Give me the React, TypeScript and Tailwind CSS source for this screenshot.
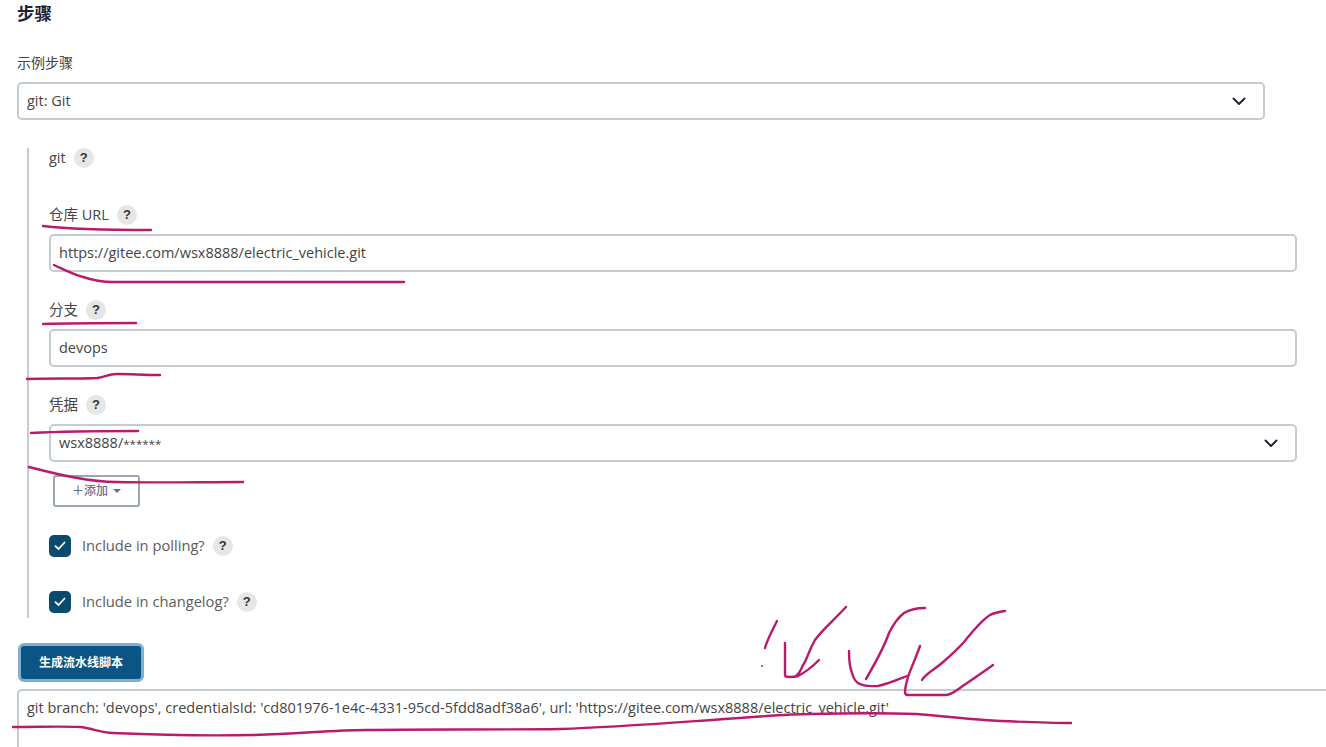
import type { ReactNode } from "react";

const fontStack = "font-['Open_Sans','Noto_Sans_CJK_SC',sans-serif]";

function Help() {
  return (
    <span className="flex h-5 w-5 shrink-0 items-center justify-center rounded-full bg-[#e6e6e6] font-['Liberation_Sans',sans-serif] text-[13px] font-bold text-[#333]">
      ?
    </span>
  );
}

function Label({ text, className }: { text: string; className?: string }) {
  return (
    <div className={`flex h-5 items-center gap-2 text-[14.5px] text-[#444] ${className ?? ""}`}>
      <span>{text}</span>
      <Help />
    </div>
  );
}

function Chevron() {
  return (
    <svg width="14" height="9" viewBox="0 0 14 9" fill="none" className="shrink-0">
      <path d="M1.5 1.5 7 7l5.5-5.5" stroke="#1f2230" strokeWidth="1.9" strokeLinecap="round" strokeLinejoin="round" />
    </svg>
  );
}

function Field({ value, select, className }: { value: ReactNode; select?: boolean; className?: string }) {
  return (
    <div
      className={`flex h-[38px] items-center justify-between rounded-[5px] border-2 border-[#c3ccd1] bg-white pl-2 pr-[17px] text-[14.5px] text-[#444] ${className ?? ""}`}
    >
      <span>{value}</span>
      {select && <Chevron />}
    </div>
  );
}

function Check({ text, className }: { text: string; className?: string }) {
  return (
    <div className={`flex h-[22px] items-center ${className ?? ""}`}>
      <span className="flex h-[22px] w-[22px] items-center justify-center rounded-[5px] bg-[#0b4a6f]">
        <svg width="12" height="10" viewBox="0 0 12 10" fill="none">
          <path d="M1.5 5.2 4.5 8l6-6.5" stroke="#fff" strokeWidth="1.8" strokeLinecap="round" strokeLinejoin="round" />
        </svg>
      </span>
      <span className="-mt-[2px] ml-[11px] mr-2 text-[14.7px] text-[#5c5c5c]">{text}</span>
      <Help />
    </div>
  );
}

// pen marks drawn over the screenshot
function Scribbles() {
  const marks = [
    "M43 226C60 228 90 230 151 230",
    "M54 265C65 270 72 274 83 277C92 280 100 282 113 282L404 282",
    "M43 324C70 323 100 323 136 323",
    "M27 379C50 378 80 379 97 378C105 377 108 374 117 374C130 374 145 375 160 375",
    "M31 433C70 431 100 431 138 431",
    "M29 467C60 475 90 482 117 482C160 483 200 482 243 482",
    "M13 727C40 727 60 726 80 727C92 728 100 733 113 733C160 735 210 736 253 735C300 734 330 730 367 730C420 729 480 730 560 729C620 727 680 722 740 718C765 716 790 714 811 714C850 713 890 713 916 714C945 716 975 720 1001 721C1025 722 1050 723 1071 723",
    "M777 621C771 633 767 640 765 648",
    "M846 607C832 622 822 630 815 640C808 652 807 660 803 665C801 670 799 674 796 676",
    "M785 643L785 675C785 677 787 677 789 677C792 677 795 677 798 676C806 672 813 666 819 660",
    "M925 608C915 608 909 610 904 613C896 619 892 627 889 633C883 650 874 665 866 679",
    "M849 651C849 660 850 668 852 673C854 680 856 683 860 684C866 687 872 686 878 686C888 684 897 680 907 676",
    "M920 646C915 660 911 668 908 677C906 684 905 688 905 692C905 694 906 695 908 695L945 695C950 695 953 693 957 690C970 681 982 673 993 665",
    "M1005 611C998 612 994 613 990 615C982 620 972 632 964 642C957 650 950 656 942 663C935 669 925 674 922 680",
  ];
  return (
    <svg className="pointer-events-none absolute left-0 top-0" width="1326" height="747" fill="none">
      {marks.map((d) => (
        <path key={d} d={d} stroke="#bb1a6c" strokeWidth="2.4" strokeLinecap="round" />
      ))}
      <circle cx="762" cy="666" r="1" fill="#bb1a6c" />
    </svg>
  );
}

export default function App() {
  return (
    <div className={`relative flex h-[747px] flex-col overflow-hidden bg-white pl-[17px] ${fontStack}`}>
      <h2 className="mt-px h-6 text-[17.5px] font-bold leading-6 text-[#1f2230]">步骤</h2>
      <div className="mt-7 h-5 text-sm leading-5 text-[#444]">示例步骤</div>
      <Field value="git: Git" select className="mt-[9px] w-[1248px]" />

      <div className="ml-[10px] mt-7 border-l-2 border-[#c3ccd1] pb-[5px] pl-5">
        <Label text="git" />
        <Label text="仓库 URL" className="mt-[37px]" />
        <Field value="https://gitee.com/wsx8888/electric_vehicle.git" className="mt-[9px] w-[1248px]" />
        <Label text="分支" className="mt-7" />
        <Field value="devops" className="mt-[9px] w-[1248px]" />
        <Label text="凭据" className="mt-7" />
        <Field
          value={
            <>
              wsx8888/<span className="text-[11.5px]">******</span>
            </>
          }
          select
          className="mt-[9px] w-[1248px]"
        />
        <button className="ml-1 mt-[13px] flex h-8 w-[87px] items-center justify-center gap-[5px] rounded-[3px] border-2 border-[#9aa7b2] bg-white text-xs font-medium text-[#6b6b8a]">
          <span>＋添加</span>
          <span className="h-0 w-0 border-x-4 border-t-4 border-x-transparent border-t-[#6b6b8a]" />
        </button>
        <Check text="Include in polling?" className="mt-7" />
        <Check text="Include in changelog?" className="mt-[34px]" />
      </div>

      <button className="ml-px mt-[25px] h-[39px] w-[126px] rounded-[6px] border-[3px] border-[#7fb0d0] bg-[#0b5585] text-xs font-bold text-white">
        生成流水线脚本
      </button>

      <div className="mt-[7px] flex-1 rounded-tl-[5px] border-l-2 border-t-2 border-[#c3ccd1] pl-2 pt-[6px] text-[14.5px] text-[#444]">
        git branch: 'devops', credentialsId: 'cd801976-1e4c-4331-95cd-5fdd8adf38a6', url: 'https://gitee.com/wsx8888/electric_vehicle.git'
      </div>

      <Scribbles />
    </div>
  );
}
